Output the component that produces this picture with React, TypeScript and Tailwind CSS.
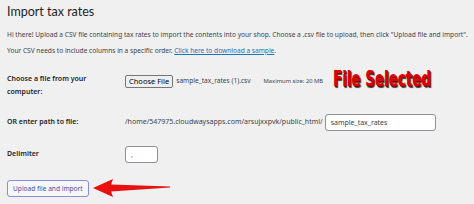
import React from "react";

export default function App() {
  return (
    <div
      className="w-[474px] h-[204px] bg-[#f0f0f1] text-[#3c434a] overflow-hidden relative"
      style={{ fontFamily: '"Noto Sans", "Open Sans", sans-serif' }}
    >
      <div className="pl-[7px] pt-[3px]">
        <h1
          className="text-[12.5px] leading-[18px] font-normal text-[#1d2327]"
          style={{ fontFamily: 'Lato, "Noto Sans", sans-serif' }}
        >
          Import tax rates
        </h1>
        <p className="mt-[9px] text-[6.6px] leading-[9px] whitespace-nowrap">
          Hi there! Upload a CSV file containing tax rates to import the contents into your shop. Choose a .csv file to upload, then click "Upload file and import".
        </p>
        <p className="mt-[7px] text-[6.6px] leading-[9px] whitespace-nowrap">
          Your CSV needs to include columns in a specific order.{" "}
          <span className="text-[#2271b1] underline">Click here to download a sample</span>.
        </p>

        <div className="mt-[14px] flex flex-col">
          <div className="flex items-start h-[32px]">
            <div className="w-[118px] shrink-0 pt-[3px] text-[7px] leading-[13px] font-semibold text-[#1d2327]">
              Choose a file from your
              <br />
              computer:
            </div>
            <div className="flex items-center mt-[3px] shrink-0 whitespace-nowrap">
              <span className="shrink-0 h-[13px] px-[3px] border border-[#767676] bg-[#efefef] rounded-[2px] text-[7.5px] leading-[11px] text-black">
                Choose File
              </span>
              <span className="shrink-0 ml-[3px] text-[6.6px]">sample_tax_rates (1).csv</span>
              <span className="shrink-0 ml-[13px] text-[5.8px]">Maximum size: 20 MB</span>
              <span
                className="shrink-0 ml-[10px] -mt-[4px] text-[22px] leading-[22px] text-[#e00000] whitespace-nowrap"
                style={{
                  fontFamily: '"DejaVu Sans Condensed", "Liberation Sans Narrow", sans-serif',
                  fontWeight: 700,
                  textShadow: "1px 1px 0 #700, 2px 2px 1px #444",
                  transform: "scaleX(0.68)",
                  transformOrigin: "left",
                  display: "inline-block",
                }}
              >
                File Selected
              </span>
            </div>
          </div>

          <div className="flex items-center h-[30px] mt-[6px]">
            <div className="w-[118px] shrink-0 text-[7px] font-semibold text-[#1d2327]">OR enter path to file:</div>
            <div className="flex items-center shrink-0 whitespace-nowrap">
              <span className="text-[7px]">/home/547975.cloudwaysapps.com/arsujxxpvk/public_html/</span>
              <span className="ml-[2px] w-[111px] h-[17px] border border-[#8c8f94] rounded-[3px] bg-white text-[7px] leading-[15px] px-[5px]">
                sample_tax_rates
              </span>
            </div>
          </div>

          <div className="flex items-center h-[30px] mt-[2px]">
            <div className="w-[118px] shrink-0 text-[7px] font-semibold text-[#1d2327]">Delimiter</div>
            <span className="w-[33px] h-[17px] border border-[#8c8f94] rounded-[3px] bg-white text-[7px] leading-[15px] px-[5px]">
              ,
            </span>
          </div>
        </div>

        <div className="mt-[9px] flex items-center">
          <span className="h-[17px] px-[5px] border border-[#8c8cdd] bg-[#f6f7f7] rounded-[3px] text-[6.6px] leading-[15px] text-[#4a4aa8] whitespace-nowrap">
            Upload file and import
          </span>
          <svg width="80" height="20" viewBox="0 0 80 20" className="ml-[3px] shrink-0">
            <path d="M1 10 L21 1 L19 6.5 L78 8.5 L78 9.5 L19 13.5 L21 19 Z" fill="#e81010" />
          </svg>
        </div>
      </div>
    </div>
  );
}
